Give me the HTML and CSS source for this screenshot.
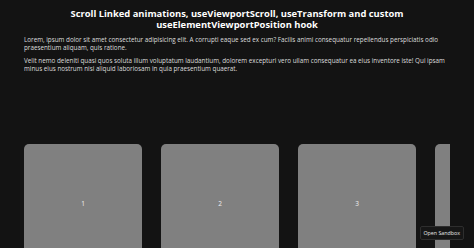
FILE: index.html
```html
<!DOCTYPE html>
<html>
<head>
<meta charset="utf-8">
<link rel="stylesheet" href="styles.css">
</head>
<body>
<div class="page">
  <h1 class="title">Scroll Linked animations, useViewportScroll, useTransform and custom useElementViewportPosition hook</h1>
  <p class="text">Lorem, ipsum dolor sit amet consectetur adipisicing elit. A corrupti eaque sed ex cum? Facilis animi consequatur repellendus perspiciatis odio praesentium aliquam, quis ratione.</p>
  <p class="text">Velit nemo deleniti quasi quos soluta illum voluptatum laudantium, dolorem excepturi vero ullam consequatur ea eius inventore iste! Qui ipsam minus eius nostrum nisi aliquid laboriosam in quia praesentium quaerat.</p>
  <div class="track">
    <div class="card">1</div>
    <div class="card">2</div>
    <div class="card">3</div>
    <div class="card"></div>
  </div>
</div>
<button class="sandbox">Open Sandbox</button>
</body>
</html>
```
FILE: styles.css
```css
html, body {
  margin: 0;
  padding: 0;
  background: #131313;
  height: 248px;
  overflow: hidden;
}
.page {
  padding: 0 24px;
  font-family: "Open Sans", "Noto Sans", sans-serif;
  color: #e6e6e6;
}
.title {
  margin: 0;
  padding-top: 8px;
  font-size: 9.4px;
  line-height: 11px;
  font-weight: 700;
  text-align: center;
  color: #ffffff;
}
.text {
  margin: 6px 0 0;
  font-size: 6.3px;
  line-height: 8px;
  color: #dcdcdc;
}
.text + .text {
  margin-top: 5px;
}
.track {
  margin-top: 71px;
  height: 104px;
  display: flex;
  align-items: flex-start;
  gap: 19px;
  overflow: hidden;
}
.card {
  flex: 0 0 118px;
  height: 118px;
  background: #808080;
  border-radius: 5px;
  display: flex;
  align-items: center;
  justify-content: center;
  font-size: 6.5px;
  color: #f0f0f0;
}
.sandbox {
  position: fixed;
  right: 10px;
  bottom: 8px;
  height: 14px;
  padding: 0 3px;
  background: #161616;
  border: 1px solid #2e2e2e;
  border-radius: 2px;
  color: #e8e8e8;
  font-family: "Open Sans", "Noto Sans", sans-serif;
  font-size: 5.3px;
  line-height: 12px;
}
```
